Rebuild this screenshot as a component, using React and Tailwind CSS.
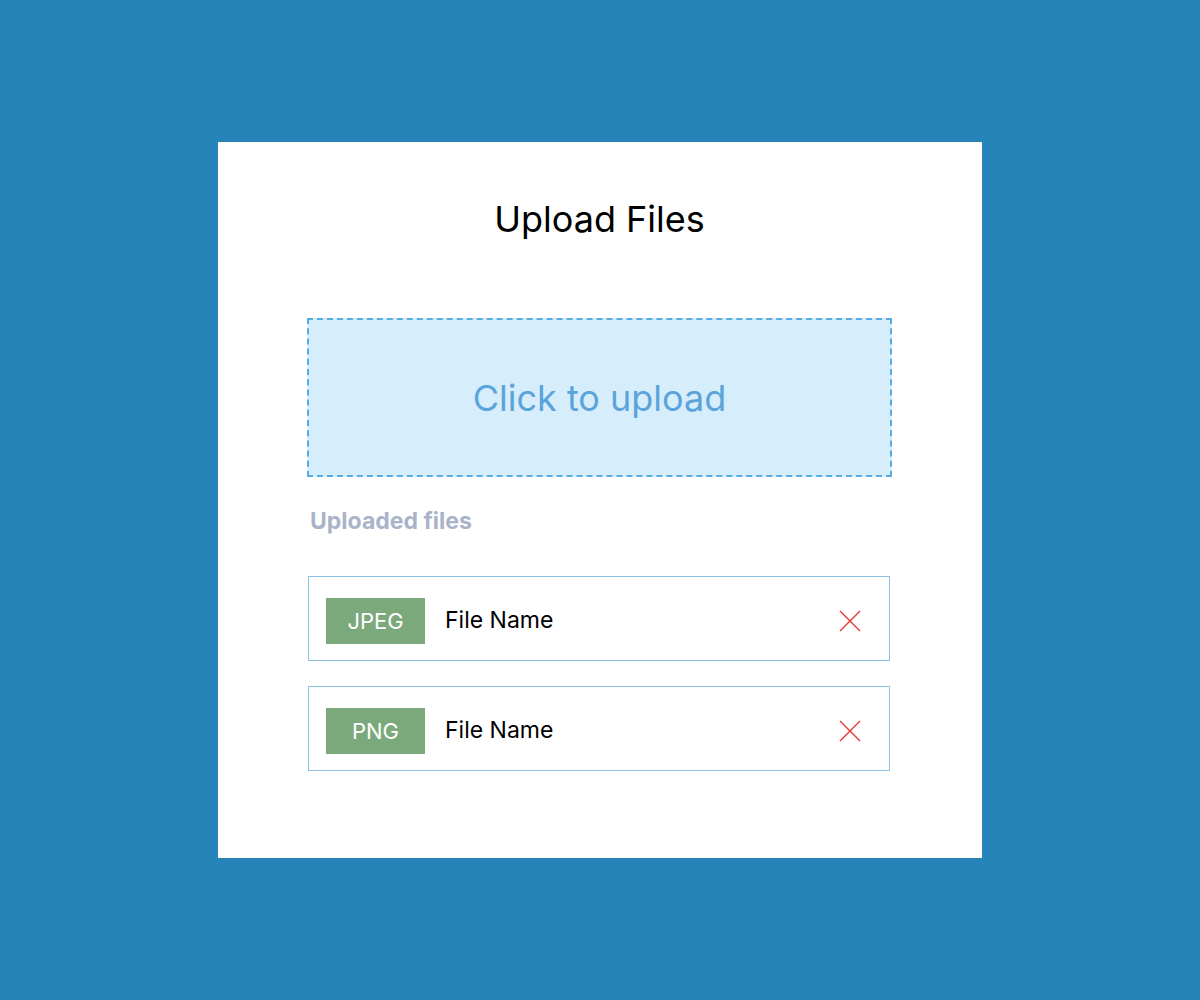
import React from 'react';

const files = [
  { type: 'JPEG', name: 'File Name' },
  { type: 'PNG', name: 'File Name' },
];

function CloseIcon() {
  return (
    <svg width="24" height="24" viewBox="0 0 24 24" fill="none" stroke="#e53935" strokeWidth="1.4">
      <path d="M2 2 L22 22 M22 2 L2 22" />
    </svg>
  );
}

function FileRow({ type, name }) {
  return (
    <div className="flex h-[85px] w-[582px] items-center border border-[#8cc2e3] pl-[17px] pr-[27px] pt-[5px]">
      <div className="flex h-[46px] w-[99px] items-center justify-center bg-[#7ba97c] text-[22px] text-white">
        {type}
      </div>
      <div className="mb-[2px] ml-[20px] flex-1 text-[23px] text-black">{name}</div>
      <button className="flex items-center justify-center">
        <CloseIcon />
      </button>
    </div>
  );
}

export default function App() {
  return (
    <div
      className="flex min-h-screen items-center justify-center bg-[#2583b7]"
      style={{ fontFamily: 'Inter, "Noto Sans", sans-serif' }}
    >
      <div className="flex h-[716px] w-[764px] flex-col bg-white pl-[89px] pt-[55px]">
        <h1 className="w-[585px] text-center text-[36px] leading-[44px] text-black">Upload Files</h1>

        <div className="mt-[77px] flex h-[159px] w-[585px] items-center justify-center border-2 border-dashed border-[#5aace0] bg-[#d6edfc]">
          <span className="text-[36px] text-[#5ba4da]">Click to upload</span>
        </div>

        <div className="mt-[31px] pl-[3px] text-[23px] font-bold leading-[26px] text-[#a9b4c9]">
          Uploaded files
        </div>

        <div className="ml-[1px] mt-[42px] flex flex-col gap-[25px]">
          {files.map((f) => (
            <FileRow key={f.type} type={f.type} name={f.name} />
          ))}
        </div>
      </div>
    </div>
  );
}
